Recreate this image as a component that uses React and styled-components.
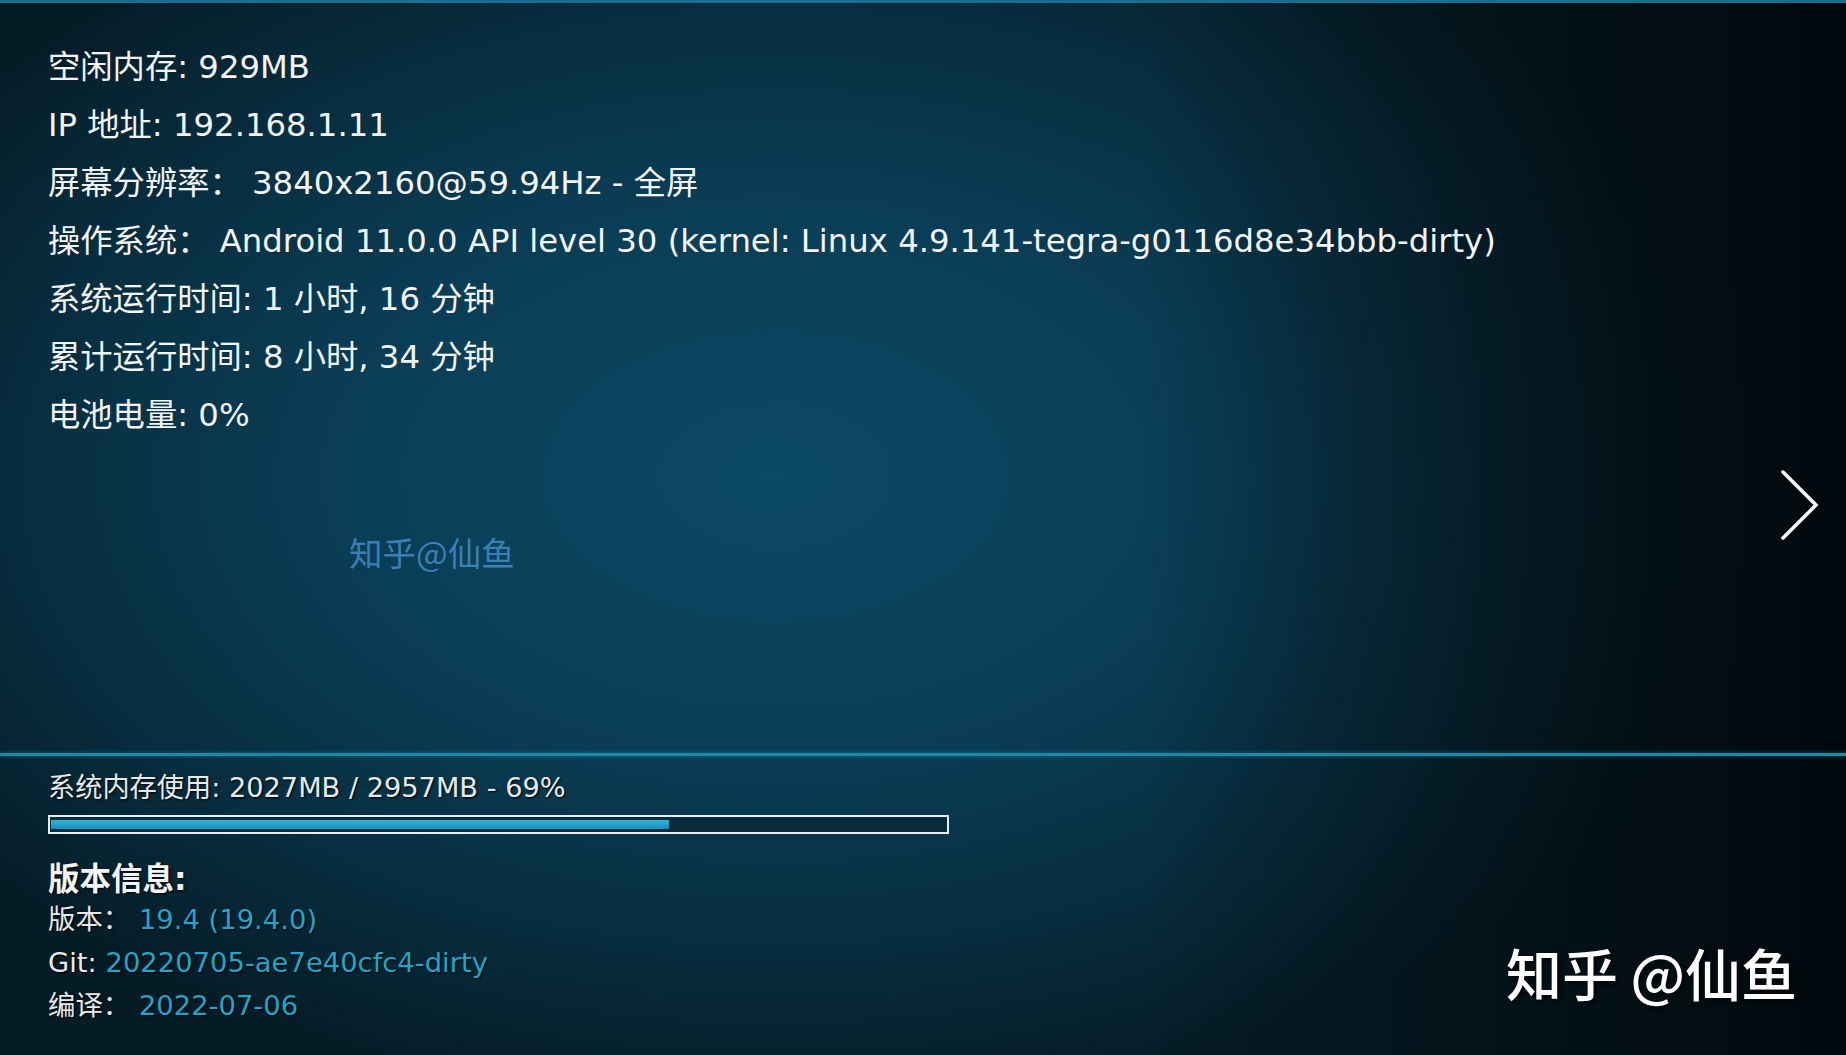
import styled, { createGlobalStyle } from "styled-components";

const GlobalStyle = createGlobalStyle`
  html, body {
    margin: 0;
    padding: 0;
    background: #04141c;
  }
  * {
    box-sizing: border-box;
  }
`;

const FONT = `"DejaVu Sans", "Noto Sans CJK SC", sans-serif`;

const Screen = styled.div`
  position: relative;
  width: 1846px;
  height: 1055px;
  overflow: hidden;
  display: flex;
  flex-direction: column;
  font-family: ${FONT};
  color: #f2f4f5;
  border-top: 3px solid #1a6f8f;
  background:
    linear-gradient(90deg, rgba(3, 12, 16, 0) 0%, rgba(3, 12, 16, 0) 62%, rgba(3, 12, 16, 0.75) 88%, rgba(2, 8, 12, 0.95) 100%),
    radial-gradient(ellipse 55% 60% at 42% 45%, #0c4a66 0%, #0a3d55 45%, #072a3a 80%, #051c26 100%);
`;

const InfoPanel = styled.div`
  height: 750px;
  display: flex;
  flex-direction: column;
  padding: 35px 0 0 48px;
`;

const InfoLine = styled.div`
  font-size: 32.3px;
  line-height: 58px;
  white-space: nowrap;
`;

const Divider = styled.div`
  height: 3px;
  background: #1c8aa6;
  box-shadow: 0 0 4px rgba(40, 170, 200, 0.5);
`;

const Footer = styled.div`
  display: flex;
  flex-direction: column;
  padding: 15px 0 0 48px;
`;

const MemoryLabel = styled.div`
  font-size: 27.2px;
  line-height: 34px;
  color: #e6eaec;
  text-shadow: 1px 1px 2px #000;
`;

const MemoryBar = styled.div`
  width: 901px;
  height: 19px;
  margin-top: 10px;
  border: 2px solid #e8eef0;
  padding: 3px 1px;
  background: #092c3c;
`;

const MemoryFill = styled.div`
  height: 100%;
  background: linear-gradient(180deg, #2bb4dc, #1a8fb8);
`;

const VersionTitle = styled.div`
  margin-top: 26px;
  font-size: 31.5px;
  font-weight: bold;
  line-height: 38px;
  color: #f2f4f5;
  text-shadow: 1px 1px 2px #000;
`;

const VersionLine = styled.div`
  font-size: 27.4px;
  line-height: 43px;
  color: #e6eaec;
  text-shadow: 1px 1px 2px #000;
`;

const Value = styled.span`
  color: #24a4c8;
`;

const Watermark = styled.div`
  position: absolute;
  left: 349px;
  top: 527px;
  font-size: 33.5px;
  line-height: 44px;
  color: #3a7fb6;
  font-family: "Noto Sans CJK SC", sans-serif;
`;

const Logo = styled.div`
  position: absolute;
  right: 49px;
  top: 934px;
  font-size: 56px;
  line-height: 70px;
  font-weight: 500;
  color: #ffffff;
  font-family: "Noto Sans CJK SC", sans-serif;
  text-shadow: 2px 2px 4px rgba(0, 0, 0, 0.8);
`;

const NextArrow = styled.svg`
  position: absolute;
  left: 1778px;
  top: 465px;
`;

export default function App() {
  const used = 2027;
  const total = 2957;
  const pct = Math.round((used / total) * 100);

  return (
    <>
      <GlobalStyle />
      <Screen>
        <InfoPanel>
          <InfoLine>空闲内存: 929MB</InfoLine>
          <InfoLine>IP 地址: 192.168.1.11</InfoLine>
          <InfoLine>屏幕分辨率： 3840x2160@59.94Hz - 全屏</InfoLine>
          <InfoLine>
            操作系统： Android 11.0.0 API level 30 (kernel: Linux 4.9.141-tegra-g0116d8e34bbb-dirty)
          </InfoLine>
          <InfoLine>系统运行时间: 1 小时, 16 分钟</InfoLine>
          <InfoLine>累计运行时间: 8 小时, 34 分钟</InfoLine>
          <InfoLine>电池电量: 0%</InfoLine>
        </InfoPanel>
        <Divider />
        <Footer>
          <MemoryLabel>
            系统内存使用: {used}MB / {total}MB - {pct}%
          </MemoryLabel>
          <MemoryBar>
            <MemoryFill style={{ width: `${pct}%` }} />
          </MemoryBar>
          <VersionTitle>版本信息:</VersionTitle>
          <VersionLine>
            版本： <Value>19.4 (19.4.0)</Value>
          </VersionLine>
          <VersionLine>
            Git: <Value>20220705-ae7e40cfc4-dirty</Value>
          </VersionLine>
          <VersionLine>
            编译： <Value>2022-07-06</Value>
          </VersionLine>
        </Footer>
        <Watermark>知乎@仙鱼</Watermark>
        <Logo>知乎 @仙鱼</Logo>
        <NextArrow width="44" height="74" viewBox="0 0 44 74">
          <polyline
            points="5,4 38,37 5,70"
            fill="none"
            stroke="#ffffff"
            strokeWidth="3.5"
            strokeLinecap="round"
            strokeLinejoin="miter"
          />
        </NextArrow>
      </Screen>
    </>
  );
}
